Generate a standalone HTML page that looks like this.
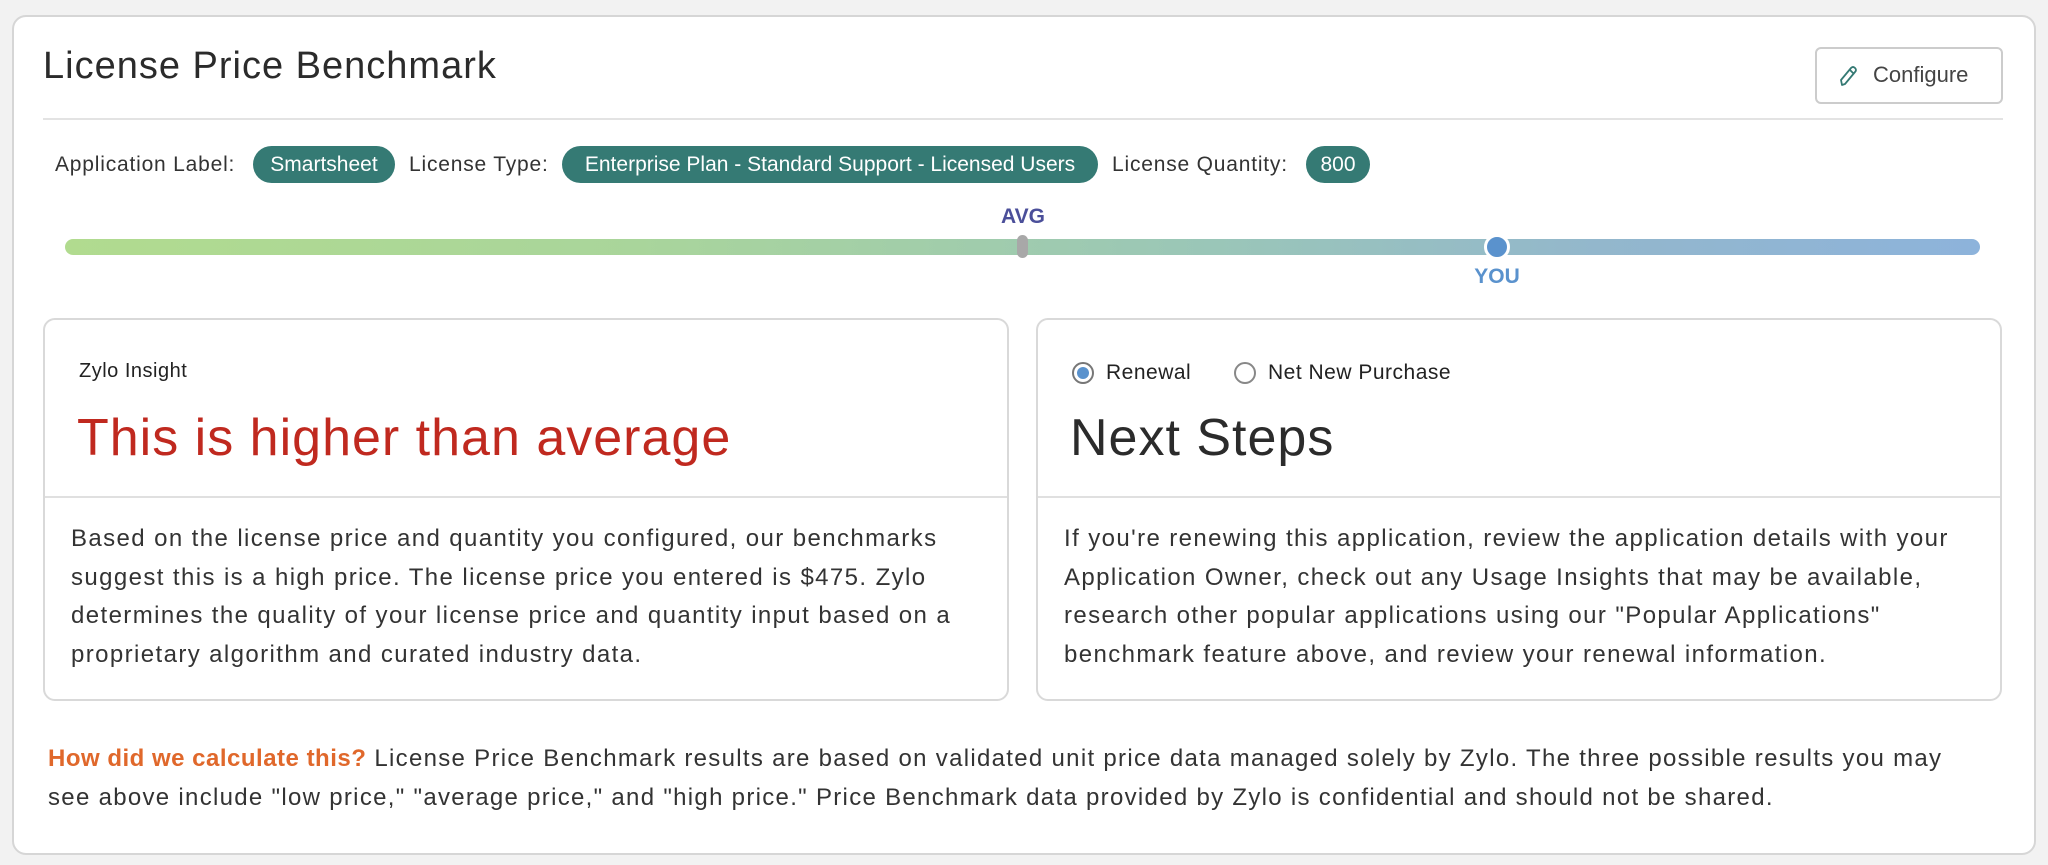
<!DOCTYPE html>
<html><head><meta charset="utf-8"><style>
*{box-sizing:border-box;margin:0;padding:0}
body{width:2048px;height:865px;background:#f2f2f2;font-family:"Liberation Sans",sans-serif;color:#333;position:relative;overflow:hidden}
.card{position:absolute;left:12px;top:15px;width:2024px;height:840px;background:#fff;border:2px solid #d6d6d6;border-radius:14px}
.abs{position:absolute;white-space:nowrap}
.pill{position:absolute;top:146px;height:37px;border-radius:19px;background:#357a74;color:#fff;font-size:21px;line-height:37px;text-align:center}
.lbl{position:absolute;top:146px;line-height:37px;font-size:21px;color:#333;letter-spacing:0.8px}
.box{position:absolute;top:318px;width:966px;height:383px;border:2px solid #d9d9d9;border-radius:12px}
.box .div{position:absolute;left:0;right:0;top:176px;border-top:2px solid #e0e0e0}
.body{position:absolute;left:26px;top:200px;font-size:24px;letter-spacing:1.4px;line-height:38.5px;color:#333;white-space:nowrap}
.big{position:absolute;left:32px;top:88px;font-size:52px;letter-spacing:1px;white-space:nowrap}
</style></head><body>
<div class="card"></div>
<div class="abs" style="left:43px;top:45px;font-size:38px;letter-spacing:1px;color:#2b2b2b">License Price Benchmark</div>
<div class="abs" style="left:1815px;top:47px;width:188px;height:57px;border:2px solid #ccc;border-radius:6px"></div>
<svg class="abs" style="left:1838px;top:65px" width="20" height="22" viewBox="0 0 20 22"><path d="M4 20 L3 15 L13 3 Q15 1 17 3 Q19 5 17 7 L7 19 Z M12 5 L16 9" fill="none" stroke="#357a74" stroke-width="1.8" stroke-linejoin="round"/></svg>
<div class="abs" style="left:1873px;top:62px;font-size:22px;color:#444">Configure</div>
<div class="abs" style="left:43px;top:118px;width:1960px;border-top:2px solid #e3e3e3"></div>
<div class="lbl" style="left:55px">Application Label:</div>
<div class="pill" style="left:253px;width:142px">Smartsheet</div>
<div class="lbl" style="left:409px">License Type:</div>
<div class="pill" style="left:562px;width:536px">Enterprise Plan - Standard Support - Licensed Users</div>
<div class="lbl" style="left:1112px">License Quantity:</div>
<div class="pill" style="left:1306px;width:64px">800</div>
<div class="abs" style="left:997px;top:205px;font-size:21px;font-weight:bold;color:#4b4f9a;width:52px;text-align:center">AVG</div>
<div class="abs" style="left:65px;top:239px;width:1915px;height:16px;border-radius:8px;background:linear-gradient(90deg,#b1db8f 0%,#a9d59b 30%,#9ac6b8 60%,#93b7cc 80%,#8db3db 100%)"></div>
<div class="abs" style="left:1017px;top:235px;width:11px;height:23px;border-radius:6px;background:#a8a8a8"></div>
<div class="abs" style="left:1484px;top:234px;width:26px;height:26px;border-radius:50%;background:#5a92cd;border:3px solid #fff"></div>
<div class="abs" style="left:1467px;top:265px;width:60px;text-align:center;font-size:21px;font-weight:bold;color:#5a92cd">YOU</div>

<div class="box" style="left:43px">
 <div class="abs" style="left:34px;top:40px;font-size:20px;letter-spacing:0.5px;color:#222">Zylo Insight</div>
 <div class="big" style="color:#c0291f">This is higher than average</div>
 <div class="div"></div>
 <div class="body">Based on the license price and quantity you configured, our benchmarks<br>suggest this is a high price. The license price you entered is $475. Zylo<br>determines the quality of your license price and quantity input based on a<br>proprietary algorithm and curated industry data.</div>
</div>
<div class="box" style="left:1036px">
 <div class="abs" style="left:34px;top:42px;width:22px;height:22px;border-radius:50%;border:2px solid #777;background:#fff"><div style="position:absolute;left:3px;top:3px;width:12px;height:12px;border-radius:50%;background:#5a92cd"></div></div>
 <div class="abs" style="left:68px;top:41px;font-size:21px;letter-spacing:0.5px;color:#222">Renewal</div>
 <div class="abs" style="left:196px;top:42px;width:22px;height:22px;border-radius:50%;border:2px solid #888;background:#fff"></div>
 <div class="abs" style="left:230px;top:41px;font-size:21px;letter-spacing:0.5px;color:#222">Net New Purchase</div>
 <div class="big" style="color:#2b2b2b">Next Steps</div>
 <div class="div"></div>
 <div class="body">If you're renewing this application, review the application details with your<br>Application Owner, check out any Usage Insights that may be available,<br>research other popular applications using our "Popular Applications"<br>benchmark feature above, and review your renewal information.</div>
</div>
<div class="abs" style="left:48px;top:740px;font-size:24px;letter-spacing:1.3px;line-height:38.5px;color:#333"><b style="color:#e0682b;letter-spacing:0.5px">How did we calculate this?</b> License Price Benchmark results are based on validated unit price data managed solely by Zylo. The three possible results you may<br>see above include "low price," "average price," and "high price." Price Benchmark data provided by Zylo is confidential and should not be shared.</div>
</body></html>
